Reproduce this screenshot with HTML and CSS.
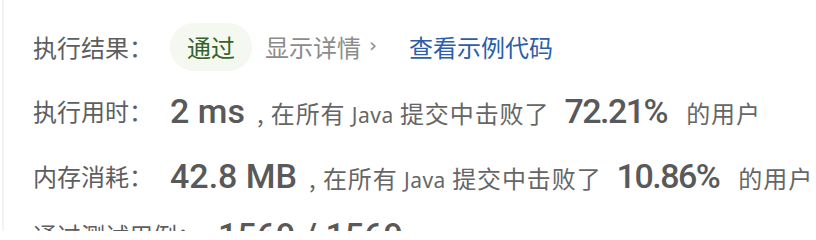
FILE: index.html
```html
<!DOCTYPE html>
<html lang="zh-CN">
<head>
<meta charset="utf-8">
<title>提交结果</title>
<link rel="stylesheet" href="styles.css">
</head>
<body>
<div class="panel">
  <div class="row first">
    <span class="label">执行结果：</span>
    <span class="badge">通过</span>
    <a class="details">显示详情<span class="chev">›</span></a>
    <a class="example">查看示例代码</a>
  </div>
  <div class="row">
    <span class="label">执行用时：</span>
    <span class="value">
      <span class="big">2 ms</span><span class="small">, 在所有 <span class="latin">Java</span> 提交中击败了</span><span class="big pct">72.21%</span><span class="small">的用户</span>
    </span>
  </div>
  <div class="row">
    <span class="label">内存消耗：</span>
    <span class="value">
      <span class="big">42.8 MB</span><span class="small">, 在所有 <span class="latin">Java</span> 提交中击败了</span><span class="big pct">10.86%</span><span class="small">的用户</span>
    </span>
  </div>
  <div class="row last">
    <span class="label">通过测试用例：</span>
    <span class="value">
      <span class="big">1569 / 1569</span>
    </span>
  </div>
</div>
</body>
</html>
```
FILE: styles.css
```css
html, body {
  margin: 0;
  padding: 0;
  background: #ffffff;
}
body {
  font-family: "Noto Sans CJK SC", "Noto Sans", sans-serif;
  color: #5a5a5a;
  overflow: hidden;
  height: 231px;
}
.panel {
  margin-left: 2px;
  border-left: 2px solid #f2f2f2;
  padding: 15px 0 0 29px;
  min-height: 400px;
}
.row {
  display: flex;
  align-items: center;
  height: 65px;
  white-space: nowrap;
}
.row.first {
  height: 63px;
}
.row.last {
  margin-top: -6px;
}
.label {
  font-size: 24px;
  color: #5e5e5e;
  margin-right: 17px;
  line-height: 1;
}
.badge {
  display: inline-flex;
  align-items: center;
  height: 48px;
  padding: 0 17px;
  border-radius: 24px;
  background: #f4f8f0;
  color: #35642a;
  font-size: 24px;
  line-height: 1;
}
.details {
  margin-left: 13px;
  font-size: 24px;
  color: #8c8c8c;
  line-height: 1;
  display: inline-flex;
  align-items: center;
}
.chev {
  font-family: "DejaVu Sans", sans-serif;
  font-size: 20px;
  margin-left: 8px;
  position: relative;
  top: -2px;
}
.example {
  margin-left: 32px;
  font-size: 24px;
  color: #2c5ea9;
  line-height: 1;
}
.value {
  line-height: 1;
}
.big {
  font-family: Roboto, "Noto Sans", sans-serif;
  font-weight: 500;
  font-size: 34px;
  color: #595959;
  margin-right: 12px;
}
.pct {
  margin-left: 15px;
  margin-right: 19px;
  letter-spacing: -1.5px;
}
.small {
  font-size: 24px;
  color: #666666;
  letter-spacing: 0.9px;
}
.latin {
  font-family: "Noto Sans", sans-serif;
  font-size: 21px;
  letter-spacing: 0.5px;
}
```
